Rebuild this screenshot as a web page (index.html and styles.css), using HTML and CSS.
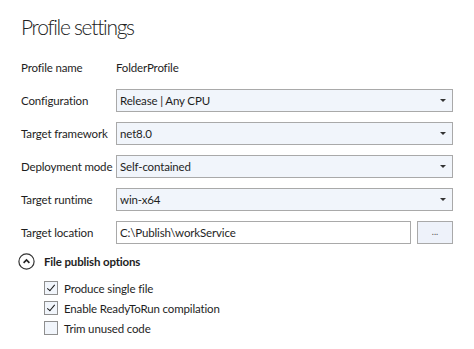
FILE: index.html
```html
<!DOCTYPE html>
<html lang="en">
<head>
    <meta charset="UTF-8">
    <meta name="viewport" content="width=device-width, initial-scale=1.0">
    <title>Profile settings</title>
    <link rel="stylesheet" href="styles.css">
</head>
<body>
    <div class="page">
        <h1>Profile settings</h1>

        <div class="form">
            <div class="row row-plain">
                <span class="label">Profile name</span>
                <span class="value">FolderProfile</span>
            </div>
            <div class="row">
                <span class="label">Configuration</span>
                <div class="select"><span>Release | Any CPU</span><span class="arrow"></span></div>
            </div>
            <div class="row">
                <span class="label">Target framework</span>
                <div class="select"><span>net8.0</span><span class="arrow"></span></div>
            </div>
            <div class="row">
                <span class="label">Deployment mode</span>
                <div class="select"><span>Self-contained</span><span class="arrow"></span></div>
            </div>
            <div class="row">
                <span class="label">Target runtime</span>
                <div class="select"><span>win-x64</span><span class="arrow"></span></div>
            </div>
            <div class="row">
                <span class="label">Target location</span>
                <div class="location">
                    <div class="input">C:\Publish\workService</div>
                    <button type="button" class="browse">...</button>
                </div>
            </div>
        </div>

        <div class="section">
            <div class="section-head">
                <svg class="toggle" width="17" height="17" viewBox="0 0 17 17">
                    <circle cx="8.5" cy="8.5" r="7.6" fill="none" stroke="#333" stroke-width="1.2"/>
                    <path d="M5.6 9.9 L8.5 7 L11.4 9.9" fill="none" stroke="#222" stroke-width="1.6"/>
                </svg>
                <span>File publish options</span>
            </div>
            <ul class="options">
                <li><span class="check checked"></span>Produce single file</li>
                <li><span class="check checked"></span>Enable ReadyToRun compilation</li>
                <li><span class="check"></span>Trim unused code</li>
            </ul>
        </div>
    </div>
</body>
</html>
```

FILE: styles.css
```css
body {
    margin: 0;
    background-color: #fff;
    color: #1e1e1e;
    font-family: 'Lato', 'Noto Sans', sans-serif;
    font-size: 11.5px;
    letter-spacing: -0.15px;
}
.page {
    padding: 11px 21px 0 21px;
}
h1 {
    margin: 0;
    font-size: 21px;
    font-weight: 300;
    line-height: 32px;
    color: #222;
    letter-spacing: -1.3px;
}
.form {
    margin-top: 13px;
    display: flex;
    flex-direction: column;
    gap: 10px;
}
.row {
    display: flex;
    align-items: center;
    height: 23px;
    white-space: nowrap;
}
.label {
    width: 95px;
    flex: none;
}
.select {
    flex: 1;
    height: 23px;
    box-sizing: border-box;
    border: 1px solid #a9a9a9;
    background-color: #f1f5fb;
    display: flex;
    align-items: center;
    justify-content: space-between;
    padding: 0 6px 0 3px;
}
.arrow {
    width: 0;
    height: 0;
    border-left: 3px solid transparent;
    border-right: 3px solid transparent;
    border-top: 3px solid #333;
}
.location {
    flex: 1;
    display: flex;
    gap: 6px;
}
.input {
    flex: 1;
    height: 23px;
    box-sizing: border-box;
    border: 1px solid #a9a9a9;
    background-color: #fff;
    padding: 0 3px;
    display: flex;
    align-items: center;
}
.browse {
    width: 36px;
    height: 23px;
    border: 1px solid #a9a9a9;
    background-color: #eef2fa;
    color: #555;
    font-size: 9px;
    padding: 0 0 3px 0;
    font-family: inherit;
}
.section {
    margin-top: 9px;
}
.section-head {
    display: flex;
    align-items: center;
    gap: 9px;
    margin-left: -3px;
    font-weight: 700;
}
.options {
    list-style: none;
    margin: 8px 0 0 23px;
    padding: 0;
}
.options li {
    display: flex;
    align-items: center;
    gap: 6px;
    height: 20px;
}
.check {
    width: 14px;
    height: 14px;
    box-sizing: border-box;
    border: 1px solid #8f8f8f;
    background-color: #f1f5fb;
    position: relative;
}
.check.checked::after {
    content: '';
    position: absolute;
    left: 4px;
    top: 1px;
    width: 3px;
    height: 7px;
    border-right: 1.5px solid #1a1a1a;
    border-bottom: 1.5px solid #1a1a1a;
    transform: rotate(40deg);
}
```
